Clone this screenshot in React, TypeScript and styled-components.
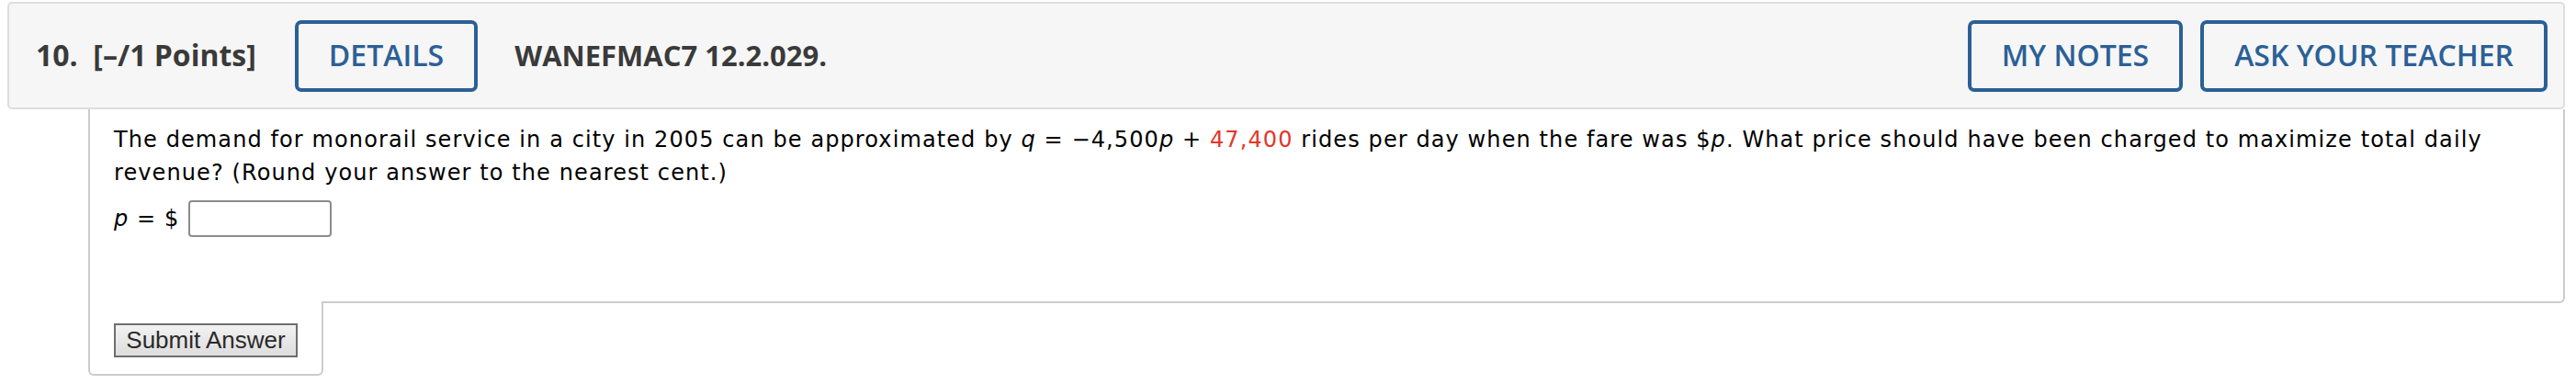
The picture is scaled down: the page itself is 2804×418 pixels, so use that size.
import React from 'react';
import styled, { createGlobalStyle } from 'styled-components';

const GlobalStyle = createGlobalStyle`
  html, body {
    margin: 0;
    padding: 0;
    background: #fff;
  }
`;

const Page = styled.div`
  padding: 2px 12px 0 8px;
`;

const Header = styled.div`
  display: flex;
  align-items: center;
  height: 113px;
  padding: 0 17px 0 29px;
  background: #f6f6f6;
  border: 2px solid #dedede;
  border-radius: 5px;
  font-family: 'Open Sans', 'Liberation Sans', sans-serif;
  color: #3a3a3a;
  line-height: 1.2;
`;

const Points = styled.span`
  font-size: 32px;
  font-weight: 700;
  white-space: pre;
  margin-right: 42px;
`;

const Code = styled.span`
  font-size: 31px;
  font-weight: 700;
  margin-left: 40px;
`;

const Spacer = styled.div`
  flex: 1;
`;

const OutlineButton = styled.button<{ $gap?: number }>`
  height: 78px;
  padding: 0 33px;
  margin-left: ${({ $gap }) => $gap ?? 0}px;
  background: transparent;
  border: 4px solid #2b6096;
  border-radius: 7px;
  color: #2b6096;
  font-family: 'Open Sans', 'Liberation Sans', sans-serif;
  font-size: 32px;
  font-weight: 600;
  line-height: 1.2;
  white-space: nowrap;
  cursor: pointer;
`;

const Body = styled.div`
  margin-left: 88px;
  padding: 15px 26px 70px 26px;
  border: 2px solid #cccccc;
  border-top: none;
  border-radius: 0 0 6px 0;
  font-family: 'DejaVu Sans', Verdana, sans-serif;
  font-size: 24px;
  letter-spacing: 1.1px;
  color: #000;
`;

const Question = styled.p`
  margin: 0;
  line-height: 36px;
`;

const Var = styled.i``;

const Red = styled.span`
  color: #e5352b;
`;

const AnswerRow = styled.div`
  display: flex;
  align-items: center;
  gap: 10px;
  margin-top: 12px;
`;

const AnswerInput = styled.input`
  width: 156px;
  height: 40px;
  box-sizing: border-box;
  border: 2px solid #8c8c8c;
  border-radius: 4px;
  background: #fff;
  font-size: 22px;
`;

const SubmitTab = styled.div`
  width: 226px;
  margin: -2px 0 0 88px;
  padding: 24px 0 18px 26px;
  background: #fff;
  border: 2px solid #cccccc;
  border-top: none;
  border-radius: 0 0 6px 6px;
`;

const SubmitButton = styled.button`
  width: 200px;
  height: 37px;
  padding: 0;
  border: 2px solid #6e6e6e;
  background: linear-gradient(#f2f2f2, #dddddd);
  color: #2a2a2a;
  font-family: 'Liberation Sans', Arial, sans-serif;
  font-size: 26px;
  line-height: 33px;
  cursor: pointer;
`;

export default function App() {
  return (
    <Page>
      <GlobalStyle />
      <Header>
        <Points>{'10.  [–/1 Points]'}</Points>
        <OutlineButton>DETAILS</OutlineButton>
        <Code>WANEFMAC7 12.2.029.</Code>
        <Spacer />
        <OutlineButton>MY NOTES</OutlineButton>
        <OutlineButton $gap={19}>ASK YOUR TEACHER</OutlineButton>
      </Header>
      <Body>
        <Question>
          The demand for monorail service in a city in 2005 can be approximated by{' '}
          <Var>q</Var> = −4,500<Var>p</Var> + <Red>47,400</Red> rides per day when the fare
          was $<Var>p</Var>. What price should have been charged to maximize total daily
          revenue? (Round your answer to the nearest cent.)
        </Question>
        <AnswerRow>
          <span>
            <Var>p</Var> = $
          </span>
          <AnswerInput type="text" />
        </AnswerRow>
      </Body>
      <SubmitTab>
        <SubmitButton>Submit Answer</SubmitButton>
      </SubmitTab>
    </Page>
  );
}
